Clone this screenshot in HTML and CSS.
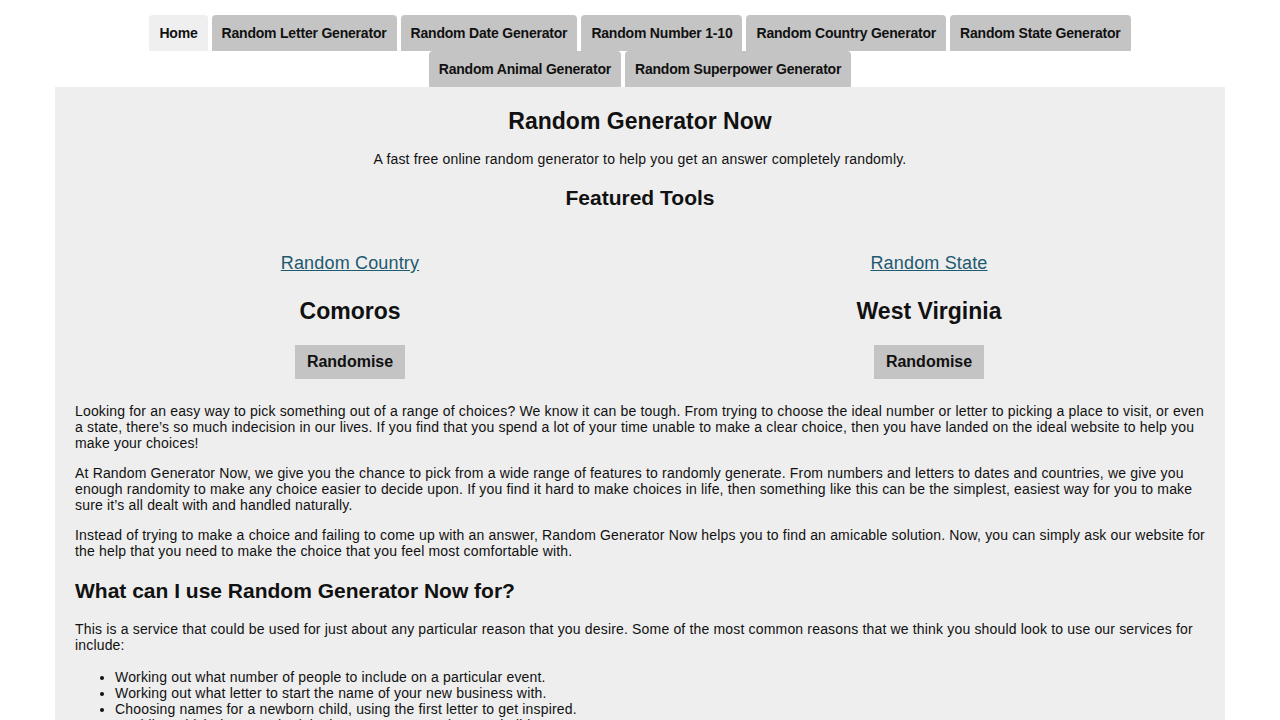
FILE: index.html
```html
<!DOCTYPE html>
<html lang="en">
<head>
<meta charset="utf-8">
<title>Random Generator Now</title>
<link rel="stylesheet" href="styles.css">
</head>
<body>
<nav class="tabs">
  <a class="tab active" href="#">Home</a>
  <a class="tab" href="#">Random Letter Generator</a>
  <a class="tab" href="#">Random Date Generator</a>
  <a class="tab" href="#">Random Number 1-10</a>
  <a class="tab" href="#">Random Country Generator</a>
  <a class="tab" href="#">Random State Generator</a>
  <a class="tab" href="#">Random Animal Generator</a>
  <a class="tab" href="#">Random Superpower Generator</a>
</nav>
<main class="panel">
  <h1 class="title">Random Generator Now</h1>
  <p class="tagline">A fast free online random generator to help you get an answer completely randomly.</p>
  <h2 class="featured">Featured Tools</h2>
  <div class="tools">
    <section class="tool">
      <a class="tool-link" href="#">Random Country</a>
      <div class="tool-result">Comoros</div>
      <button class="tool-btn" type="button">Randomise</button>
    </section>
    <section class="tool">
      <a class="tool-link" href="#">Random State</a>
      <div class="tool-result">West Virginia</div>
      <button class="tool-btn" type="button">Randomise</button>
    </section>
  </div>
  <div class="copy">
    <p>Looking for an easy way to pick something out of a range of choices? We know it can be tough. From trying to choose the ideal number or letter to picking a place to visit, or even a state, there’s so much indecision in our lives. If you find that you spend a lot of your time unable to make a clear choice, then you have landed on the ideal website to help you make your choices!</p>
    <p>At Random Generator Now, we give you the chance to pick from a wide range of features to randomly generate. From numbers and letters to dates and countries, we give you enough randomity to make any choice easier to decide upon. If you find it hard to make choices in life, then something like this can be the simplest, easiest way for you to make sure it’s all dealt with and handled naturally.</p>
    <p>Instead of trying to make a choice and failing to come up with an answer, Random Generator Now helps you to find an amicable solution. Now, you can simply ask our website for the help that you need to make the choice that you feel most comfortable with.</p>
    <h2 class="section-title">What can I use Random Generator Now for?</h2>
    <p>This is a service that could be used for just about any particular reason that you desire. Some of the most common reasons that we think you should look to use our services for include:</p>
    <ul class="uses">
      <li>Working out what number of people to include on a particular event.</li>
      <li>Working out what letter to start the name of your new business with.</li>
      <li>Choosing names for a newborn child, using the first letter to get inspired.</li>
      <li>Deciding which date to schedule the next team meeting or a holiday away.</li>
    </ul>
  </div>
</main>
</body>
</html>
```
FILE: styles.css
```css
html, body {
  margin: 0;
  padding: 0;
  background: #fff;
}

body {
  font-family: "Liberation Sans", Arial, sans-serif;
  font-size: 14px;
  line-height: 16px;
  letter-spacing: 0.17px;
  color: #111;
}

/* top navigation tabs */
.tabs {
  display: flex;
  flex-wrap: wrap;
  justify-content: center;
  column-gap: 4px;
  padding: 15px 55px 0;
}

.tab {
  display: block;
  padding: 10px 10px;
  height: 16px;
  background: #c4c4c4;
  color: #111;
  font-weight: bold;
  letter-spacing: -0.2px;
  text-decoration: none;
  border-radius: 4px 4px 0 0;
}

.tab.active {
  background: #efefef;
}

/* main content panel */
.panel {
  margin: 0 55px;
  background: #eeeeee;
  padding: 20px 20px 40px;
  border-radius: 0 0 4px 4px;
}

.title {
  margin: 0;
  font-size: 23px;
  line-height: 28px;
  letter-spacing: 0;
  text-align: center;
}

.tagline {
  margin: 16px 0 0;
  text-align: center;
}

.featured {
  margin: 18px 0 0;
  font-size: 21px;
  line-height: 26px;
  letter-spacing: 0;
  text-align: center;
}

.tools {
  display: grid;
  grid-template-columns: 550px 550px;
  column-gap: 29px;
  margin-top: 41px;
}

.tool {
  display: flex;
  flex-direction: column;
  align-items: center;
}

.tool-link {
  font-size: 18px;
  line-height: 22px;
  color: #1d5a70;
}

.tool-result {
  margin-top: 23px;
  font-size: 23px;
  line-height: 28px;
  font-weight: bold;
  letter-spacing: 0;
}

.tool-btn {
  margin-top: 20px;
  padding: 0 12px;
  height: 34px;
  border: none;
  background: #c4c4c4;
  color: #111;
  font-family: inherit;
  font-size: 16px;
  font-weight: bold;
  letter-spacing: 0;
}

.copy {
  margin-top: 24px;
}

.copy p {
  margin: 0 0 14px;
}

.section-title {
  margin: 19px 0 17px;
  font-size: 21px;
  line-height: 26px;
  letter-spacing: 0;
}

.uses {
  margin: 16px 0 0;
  padding-left: 40px;
}
```
